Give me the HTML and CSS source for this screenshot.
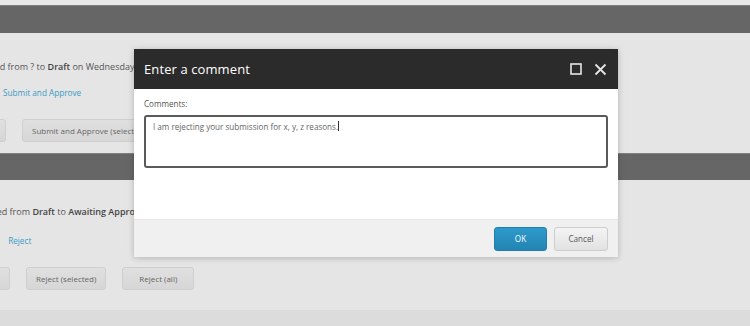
FILE: index.html
```html
<!DOCTYPE html>
<html>
<head>
<meta charset="utf-8">
<link rel="stylesheet" href="styles.css">
</head>
<body>
<div class="page">
  <div class="strip"></div>
  <div class="bar"></div>
  <section class="section s1">
    <p class="msg">Item changed from ? to <b>Draft</b> on Wednesday, December 10, 2014 by sitecore\admin</p>
    <div class="links"><a class="lnk">Submit</a><a class="lnk">Submit and Approve</a></div>
    <div class="btns"><span class="btn">Submit (all)</span><span class="btn">Submit and Approve (selected)</span></div>
  </section>
  <div class="bar bar2"></div>
  <section class="section s2">
    <p class="msg">Item changed from <b>Draft</b> to <b>Awaiting Approval</b> on Wednesday, December 10, 2014</p>
    <div class="links"><a class="lnk">Approve</a><a class="lnk">Reject</a></div>
    <div class="btns"><span class="btn">Approve (all)</span><span class="btn">Reject (selected)</span><span class="btn">Reject (all)</span></div>
  </section>
  <div class="bottom"></div>
</div>

<div class="dialog">
  <div class="dlg-head">
    <span class="dlg-title">Enter a comment</span>
    <span class="dlg-icons">
      <svg class="ico" width="12" height="12" viewBox="0 0 12 12"><rect x="1" y="1" width="10" height="10" fill="none" stroke="#e6e6e6" stroke-width="1.6"/></svg>
      <svg class="ico" width="13" height="13" viewBox="0 0 13 13"><path d="M1.5 1.5L11.5 11.5M11.5 1.5L1.5 11.5" stroke="#e6e6e6" stroke-width="1.8" fill="none"/></svg>
    </span>
  </div>
  <div class="dlg-body">
    <div class="label">Comments:</div>
    <div class="textarea">I am rejecting your submission for x, y, z reasons.<span class="caret"></span></div>
  </div>
  <div class="dlg-foot">
    <span class="dbtn ok">OK</span>
    <span class="dbtn cancel">Cancel</span>
  </div>
</div>
</body>
</html>
```
FILE: styles.css
```css
html, body {
  margin: 0;
  padding: 0;
}
body {
  width: 750px;
  height: 326px;
  overflow: hidden;
  background: #e5e5e5;
  font-family: "Open Sans", "DejaVu Sans", sans-serif;
  position: relative;
}
.page {
  display: flex;
  flex-direction: column;
}
.strip {
  height: 5px;
  background: #e8e8e8;
}
.bar {
  height: 27px;
  background: #666666;
  border-top: 1px solid #808080;
}
.bar2 {
  height: 26px;
}
.section {
  overflow: hidden;
  display: flex;
  flex-direction: column;
}
.s1 {
  height: 120px;
}
.s2 {
  height: 130px;
}
.msg {
  margin: 0;
  font-size: 9px;
  color: #555;
  white-space: nowrap;
  line-height: 12px;
}
.msg b {
  font-weight: 600;
  color: #444;
}
.links {
  display: flex;
  gap: 16px;
  font-size: 8.2px;
  line-height: 12px;
  white-space: nowrap;
}
.lnk {
  color: #3a9bc6;
}
.btns {
  display: flex;
  gap: 16px;
  white-space: nowrap;
}
.btn {
  height: 23px;
  min-width: 72px;
  box-sizing: border-box;
  padding: 0 9px;
  display: flex;
  align-items: center;
  justify-content: center;
  border: 1px solid #cfcfcf;
  border-radius: 3px;
  background: linear-gradient(#e0e0e0, #d6d6d6);
  color: #666;
  font-size: 8px;
}
.s1 .msg { margin: 28px 0 0 -52px; }
.s1 .links { margin: 14px 0 0 -40px; }
.s1 .btns { margin: 20px 0 0 -66px; }
.s2 .msg { margin: 26px 0 0 -50px; }
.s2 .links { margin: 17px 0 0 -40px; }
.s2 .btns { margin: 20px 0 0 -62px; }
.bottom {
  height: 16px;
  background: #dcdcdc;
}

.dialog {
  position: absolute;
  left: 134px;
  top: 49px;
  width: 484px;
  display: flex;
  flex-direction: column;
  box-shadow: 0 1px 6px rgba(0,0,0,0.22);
  background: #fff;
}
.dlg-head {
  height: 40px;
  background: #2b2b2b;
  display: flex;
  align-items: center;
  justify-content: space-between;
  padding: 0 11px 0 10px;
}
.dlg-title {
  color: #fff;
  font-size: 13px;
  letter-spacing: 0.1px;
}
.dlg-icons {
  display: flex;
  align-items: center;
  gap: 12px;
}
.ico {
  display: block;
}
.dlg-body {
  height: 130px;
  padding: 10px 10px 0 10px;
  box-sizing: border-box;
}
.label {
  font-size: 8.1px;
  color: #555;
  line-height: 10px;
}
.textarea {
  margin-top: 6px;
  height: 53px;
  box-sizing: border-box;
  border: 2px solid #5a5a5a;
  border-radius: 3px;
  padding: 4px 7px;
  font-size: 8.1px;
  color: #666;
  line-height: 12px;
}
.caret {
  display: inline-block;
  width: 1px;
  height: 10px;
  background: #333;
  vertical-align: -1px;
}
.dlg-foot {
  height: 38px;
  background: #f0f0f0;
  border-top: 1px solid #e6e6e6;
  box-sizing: border-box;
  display: flex;
  align-items: center;
  justify-content: flex-end;
  gap: 7px;
  padding: 0 10px;
}
.dbtn {
  height: 24px;
  box-sizing: border-box;
  display: flex;
  align-items: center;
  justify-content: center;
  border-radius: 3px;
  font-size: 8.1px;
}
.ok {
  width: 53px;
  background: linear-gradient(#2e9acb, #2384b3);
  border: 1px solid #227fac;
  color: #fff;
}
.cancel {
  width: 54px;
  background: linear-gradient(#f4f4f4, #e2e2e2);
  border: 1px solid #cdcdcd;
  color: #555;
}
```
